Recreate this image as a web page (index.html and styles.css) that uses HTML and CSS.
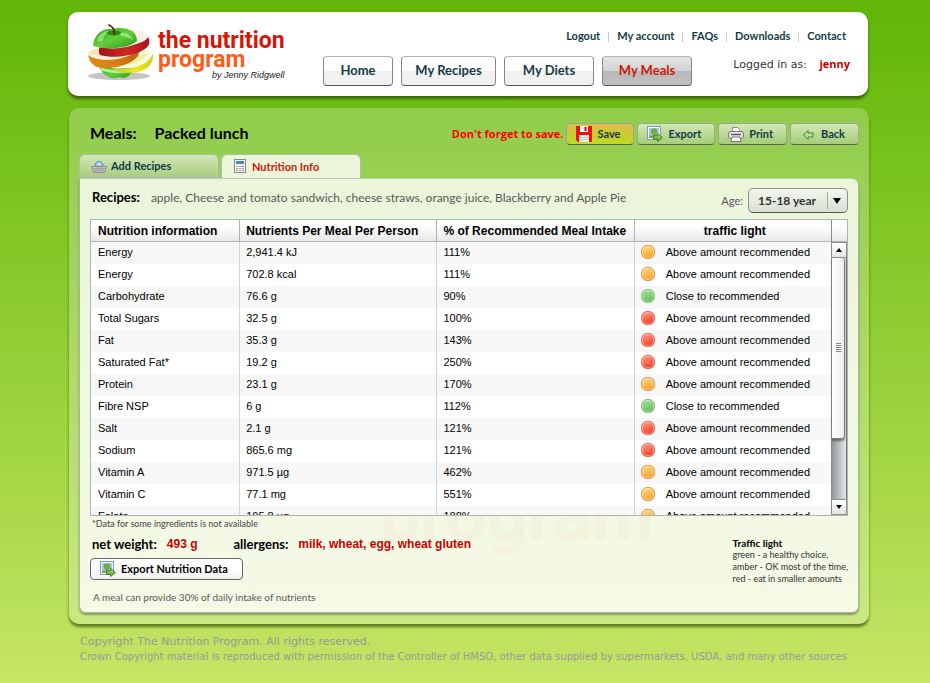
FILE: index.html
```html
<!DOCTYPE html>
<html lang="en">
<head>
    <meta charset="UTF-8">
    <meta name="viewport" content="width=device-width, initial-scale=1.0">
    <title>The Nutrition Program</title>
    <link rel="stylesheet" href="styles.css">
</head>
<body>
    <svg class="sprite" width="0" height="0" aria-hidden="true">
        <defs>
            <linearGradient id="gArrow" x1="0" y1="0" x2="0" y2="1">
                <stop offset="0" stop-color="#a9dc7c"/>
                <stop offset="1" stop-color="#55a626"/>
            </linearGradient>
        </defs>
        <symbol id="icon-export" viewBox="0 0 16 16">
            <rect x="0.5" y="0.5" width="13" height="13" fill="#f4f8fd" stroke="#7d9cc4"/>
            <rect x="2" y="2" width="10" height="10" fill="#a9c8ee"/>
            <path d="M2 9.5h10V12H2z" fill="#76a652"/>
            <rect x="6.3" y="7" width="1.6" height="4" fill="#7a6a3a"/>
            <circle cx="7" cy="5.5" r="3.3" fill="#72ad3f"/>
            <path d="M6.5 9.7h4V7.4l5 4.1-5 4.1v-2.3h-4z" fill="url(#gArrow)" stroke="#3a7d1b" stroke-width="0.9"/>
        </symbol>
    </svg>

    <header class="header">
        <a class="logo" href="#">
            <svg width="68" height="60" viewBox="0 0 68 60" aria-hidden="true">
                <defs>
                    <linearGradient id="gGreen" x1="0" y1="0" x2="1" y2="1">
                        <stop offset="0" stop-color="#2f9c17"/>
                        <stop offset="0.5" stop-color="#63cf3c"/>
                        <stop offset="1" stop-color="#2a9a14"/>
                    </linearGradient>
                    <linearGradient id="gRed" x1="0" y1="0" x2="1" y2="0">
                        <stop offset="0" stop-color="#9d1518"/>
                        <stop offset="0.55" stop-color="#d02a26"/>
                        <stop offset="1" stop-color="#a8171b"/>
                    </linearGradient>
                    <linearGradient id="gOrange" x1="0" y1="0" x2="1" y2="0">
                        <stop offset="0" stop-color="#e08a1c"/>
                        <stop offset="0.6" stop-color="#d97c12"/>
                        <stop offset="1" stop-color="#b9610b"/>
                    </linearGradient>
                    <linearGradient id="gYellow" x1="0" y1="0" x2="1" y2="0">
                        <stop offset="0" stop-color="#c9c40a"/>
                        <stop offset="0.6" stop-color="#eeea20"/>
                        <stop offset="1" stop-color="#d2d010"/>
                    </linearGradient>
                </defs>
                <ellipse cx="32" cy="54" rx="31" ry="4" fill="#c4c4c4"/>
                <path d="M12 45c4 8 11 12 17 11 3-1 4-1 7 0 5 0 9-5 11-10z" fill="url(#gGreen)"/>
                <path d="M12 45c10 3 22 5 35 1l-3 4c-10 2-21 1-29-1z" fill="#b9eaa0"/>
                <path d="M24 46c14 3 38-1 42-15 1 9-4 16-12 18-10 3-24 2-30-3z" fill="url(#gYellow)"/>
                <path d="M24 46c2-7 32-21 41-17 4 5-12 20-41 17z" fill="#fbfbe0"/>
                <path d="M33 43c8-6 20-11 27-11-2 7-15 11-27 11z" fill="#eef0a4"/>
                <path d="M1 32c1 7 4 11 9 13 13 3 33-1 41-11l2-6c-14 9-38 13-52 4z" fill="url(#gOrange)"/>
                <path d="M12 26C3 27 0 30 1 33c7 6 30 7 44-1z" fill="#fdf1dd"/>
                <path d="M12 26c-5 1-8 3-9 5 7 4 20 4 29 1z" fill="#fae0bd"/>
                <path d="M13 25c-2 3-1 6 0 8 16 5 46-1 49-11 1-4 0-6-2-8-7 10-31 15-47 11z" fill="url(#gRed)"/>
                <path d="M47 9c7-1 13 1 14 5 0 7-22 12-48 11z" fill="#fbf0e6"/>
                <path d="M6 24C7 13 14 6 25 7c6-2 14-1 18 1 5 2 7 6 7 11-9 8-30 9-44 5z" fill="url(#gGreen)"/>
                <path d="M10 18c2-6 7-9 12-9-3 2-6 6-6 9 0 2-6 2-6 0z" fill="#a5ec83" opacity="0.7"/>
                <path d="M30 12c6-3 14 0 16 6-5-3-11-4-16-6z" fill="#b4f18f" opacity="0.7"/>
                <ellipse cx="27" cy="11" rx="7" ry="2.5" fill="#2c8c13"/>
                <path d="M27 12c1-4-1-7-5-9" fill="none" stroke="#5c2b14" stroke-width="1.8" stroke-linecap="round"/>
            </svg>
            <span class="logo-text">
                <span class="logo-red">the nutrition</span>
                <span class="logo-orange">program</span>
                <span class="logo-by">by Jenny Ridgwell</span>
            </span>
        </a>
        <div class="header-right">
            <ul class="util-links">
                <li><a href="#">Logout</a></li>
                <li><a href="#">My account</a></li>
                <li><a href="#">FAQs</a></li>
                <li><a href="#">Downloads</a></li>
                <li><a href="#">Contact</a></li>
            </ul>
            <div class="nav-row">
                <nav class="nav">
                    <a href="#">Home</a>
                    <a href="#">My Recipes</a>
                    <a href="#">My Diets</a>
                    <a href="#" class="active">My Meals</a>
                </nav>
                <p class="login">Logged in as: <strong>jenny</strong></p>
            </div>
        </div>
    </header>

    <main class="main">
        <div class="title-row">
            <h1>Meals: <span>Packed lunch</span></h1>
            <div class="actions">
                <span class="warning">Don't forget to save.</span>
                <button type="button" class="btn btn-save">
                    <svg width="16" height="16" viewBox="0 0 16 16">
                        <path d="M0 0h16v16H2l-2-2z" fill="#ee1111"/>
                        <rect x="4" width="8" height="6" fill="#f3f3f3"/>
                        <rect x="8.5" y="1" width="2" height="4" fill="#d01010"/>
                        <rect x="3" y="9" width="10" height="7" fill="#e9ece9"/>
                        <path d="M3 11.5h10M3 13.5h10" stroke="#c9cdc9"/>
                    </svg>
                    Save
                </button>
                <button type="button" class="btn">
                    <svg width="16" height="16"><use href="#icon-export"/></svg>
                    Export
                </button>
                <button type="button" class="btn">
                    <svg width="16" height="16" viewBox="0 0 16 16">
                        <path d="M4.5 7V1.5h5l2 2V7" fill="#fff" stroke="#8b8b8b"/>
                        <rect x="0.5" y="5.5" width="15" height="7" rx="2.5" fill="#e6e6e6" stroke="#777"/>
                        <path d="M3 8.5h10" stroke="#555" stroke-width="1.4"/>
                        <path d="M4 11h8l1 4.500H3z" fill="#fff" stroke="#777"/>
                    </svg>
                    Print
                </button>
                <button type="button" class="btn">
                    <svg width="16" height="16" viewBox="0 0 16 16">
                        <path d="M3.500 9l4.500-4.500v2.500h5v4H8v2.500z" fill="#b4dd98" stroke="#3f8a24" stroke-linejoin="round"/>
                    </svg>
                    Back
                </button>
            </div>
        </div>

        <div class="tabs">
            <a href="#" class="tab">
                <svg width="16" height="16" viewBox="0 0 16 16">
                    <path d="M4 8c0-6 8-6 8 0" fill="#8fc3ea" stroke="#4f8fc4"/>
                    <path d="M6 7l2-3 2 3z" fill="#d8eefc"/>
                    <path d="M0.500 8.500h15l-2 6h-11z" fill="#c9c9c9" stroke="#8d8d8d"/>
                    <path d="M2 10.500h12M2.500 12.500h11M5 9v5M8 9v5M11 9v5" stroke="#979797" stroke-width="0.8"/>
                </svg>
                Add Recipes
            </a>
            <a href="#" class="tab active">
                <svg width="14" height="16" viewBox="0 0 14 16">
                    <rect x="1.500" y="1.500" width="11" height="13" fill="#fafafa" stroke="#8a8a8a"/>
                    <rect x="3" y="3" width="8" height="3" fill="#4a7fcb"/>
                    <path d="M3 8.500h2M6 8.500h2M3 10.500h2M6 10.500h2M9 10.500h2M3 12.500h2M6 12.500h2M9 12.500h2" stroke="#999"/>
                    <path d="M9 8.500h2" stroke="#e33"/>
                </svg>
                Nutrition Info
            </a>
        </div>

        <section class="panel">
            <span class="watermark" aria-hidden="true">program</span>
            <div class="recipes-row">
                <p class="recipes"><strong>Recipes:</strong> apple, Cheese and tomato sandwich, cheese straws, orange juice, Blackberry and Apple Pie</p>
                <label for="age">Age:</label>
                <span class="select-box">
                    <select id="age">
                        <option>15-18 year</option>
                    </select>
                </span>
            </div>

            <div class="grid">
                <table>
                    <thead>
                        <tr>
                            <th>Nutrition information</th>
                            <th>Nutrients Per Meal Per Person</th>
                            <th>% of Recommended Meal Intake</th>
                            <th>traffic light</th>
                        </tr>
                    </thead>
                    <tbody>
                        <tr><td>Energy</td><td>2,941.4 kJ</td><td>111%</td><td><i class="light amber"></i>Above amount recommended</td></tr>
                        <tr><td>Energy</td><td>702.8 kcal</td><td>111%</td><td><i class="light amber"></i>Above amount recommended</td></tr>
                        <tr><td>Carbohydrate</td><td>76.6 g</td><td>90%</td><td><i class="light green"></i>Close to recommended</td></tr>
                        <tr><td>Total Sugars</td><td>32.5 g</td><td>100%</td><td><i class="light red"></i>Above amount recommended</td></tr>
                        <tr><td>Fat</td><td>35.3 g</td><td>143%</td><td><i class="light red"></i>Above amount recommended</td></tr>
                        <tr><td>Saturated Fat*</td><td>19.2 g</td><td>250%</td><td><i class="light red"></i>Above amount recommended</td></tr>
                        <tr><td>Protein</td><td>23.1 g</td><td>170%</td><td><i class="light amber"></i>Above amount recommended</td></tr>
                        <tr><td>Fibre NSP</td><td>6 g</td><td>112%</td><td><i class="light green"></i>Close to recommended</td></tr>
                        <tr><td>Salt</td><td>2.1 g</td><td>121%</td><td><i class="light red"></i>Above amount recommended</td></tr>
                        <tr><td>Sodium</td><td>865.6 mg</td><td>121%</td><td><i class="light red"></i>Above amount recommended</td></tr>
                        <tr><td>Vitamin A</td><td>971.5 µg</td><td>462%</td><td><i class="light amber"></i>Above amount recommended</td></tr>
                        <tr><td>Vitamin C</td><td>77.1 mg</td><td>551%</td><td><i class="light amber"></i>Above amount recommended</td></tr>
                        <tr><td>Folate</td><td>195.8 µg</td><td>188%</td><td><i class="light amber"></i>Above amount recommended</td></tr>
                    </tbody>
                </table>
                <div class="scroll-col">
                    <div class="scroll-head"></div>
                    <button type="button" class="scroll-btn" aria-label="Scroll up"><svg width="6" height="4"><path d="M0 4h6L3 0z"/></svg></button>
                    <div class="scroll-track"><div class="scroll-thumb"><span></span></div></div>
                    <button type="button" class="scroll-btn" aria-label="Scroll down"><svg width="6" height="4"><path d="M0 0h6L3 4z"/></svg></button>
                </div>
            </div>

            <div class="summary">
                <div>
                    <p class="footnote">*Data for some ingredients is not available</p>
                    <dl class="totals">
                        <dt>net weight:</dt><dd>493 g</dd>
                        <dt>allergens:</dt><dd>milk, wheat, egg, wheat gluten</dd>
                    </dl>
                    <button type="button" class="btn btn-white">
                        <svg width="16" height="16"><use href="#icon-export"/></svg>
                        Export Nutrition Data
                    </button>
                    <p class="note">A meal can provide 30% of daily intake of nutrients</p>
                </div>
                <div class="legend">
                    <h2>Traffic light</h2>
                    <p>green - a healthy choice,<br>amber - OK most of the time,<br>red - eat in smaller amounts</p>
                </div>
            </div>
        </section>
    </main>

    <footer class="footer">
        <p>Copyright The Nutrition Program. All rights reserved.</p>
        <p class="small">Crown Copyright material is reproduced with permission of the Controller of HMSO, other data supplied by supermarkets, USDA, and many other sources</p>
    </footer>
</body>
</html>
```
FILE: styles.css
```css
* {
    box-sizing: border-box;
}
body {
    margin: 0;
    padding: 12px 61px 0 68px;
    min-height: 100vh;
    background: linear-gradient(#60b506, #72bf17 18%, #a8d848 72%, #bbe05b 90%, #c7e566) no-repeat;
    font-family: Lato, "Liberation Sans", sans-serif;
    font-size: 12px;
    color: #000;
}
p, h1, h2, ul, dl, dd {
    margin: 0;
    padding: 0;
}
a {
    color: inherit;
    text-decoration: none;
}
.sprite {
    position: absolute;
}

/* header */
.header {
    display: flex;
    height: 84px;
    margin-right: 1px;
    background: #fff;
    border-radius: 10px;
    box-shadow: 0 3px 3px rgba(35, 65, 0, 0.7);
}
.logo {
    display: flex;
    flex: 0 0 255px;
    padding: 10px 0 0 19px;
}
.logo svg {
    flex: none;
}
.logo-text {
    display: flex;
    flex-direction: column;
    padding: 9px 0 0 3px;
    font-family: Roboto, sans-serif;
    font-weight: 700;
    font-size: 23px;
    line-height: 19px;
    white-space: nowrap;
}
.logo-red {
    color: #d31706;
}
.logo-orange {
    color: #ff5d16;
}
.logo-by {
    align-self: flex-end;
    font: italic 9px/12px "Liberation Sans", sans-serif;
    color: #222;
}
.header-right {
    flex: 1;
}
.util-links {
    display: flex;
    justify-content: flex-end;
    padding: 16px 22px 0 0;
    list-style: none;
    font-weight: 700;
    font-size: 11px;
    line-height: 16px;
    color: #123c45;
}
.util-links li {
    display: flex;
    align-items: center;
}
.util-links li + li::before {
    content: "";
    width: 1px;
    height: 10px;
    margin: 2px 8px 0;
    background: #c5cccc;
}
.nav-row {
    display: flex;
    justify-content: space-between;
    padding: 12px 18px 0 0;
}
.nav {
    display: grid;
    grid-template-columns: 70px 95px 90px 90px;
    gap: 8px;
}
.nav a {
    height: 30px;
    border: 1px solid #888;
    border-top-color: #b5b5b5;
    border-bottom-color: #555;
    border-radius: 4px;
    background: linear-gradient(#fff 50%, #f1f1f1 50%);
    font-weight: 700;
    font-size: 13px;
    line-height: 26px;
    text-align: center;
    color: #123c45;
}
.nav a.active {
    background: linear-gradient(#e4e4e4, #d2d2d2 50%, #b8b8b8 50%, #c0c0c0);
    color: #d01708;
}
.login {
    font: 11px/16px "DejaVu Sans", sans-serif;
    color: #333;
}
.login strong {
    margin-left: 9px;
    font-family: "Open Sans", sans-serif;
    color: #c80000;
}

/* main box */
.main {
    margin: 12px 0 0 1px;
    padding: 15px 10px 11px;
    border-radius: 10px;
    background: rgba(255, 255, 255, 0.23);
    box-shadow: 0 3px 3px rgba(50, 80, 10, 0.7);
}
.title-row {
    display: flex;
    justify-content: space-between;
    padding-left: 11px;
}
.title-row h1 {
    font-size: 16px;
    line-height: 19px;
}
.title-row h1 span {
    margin-left: 14px;
}
.actions {
    display: flex;
    align-items: center;
    gap: 3px;
}
.warning {
    font: bold 11px/20px "Open Sans", sans-serif;
    color: #f00;
}
.btn {
    display: flex;
    align-items: center;
    gap: 5px;
    height: 22px;
    padding: 0 13px 1px 9px;
    border: 1px solid #9aa795;
    border-bottom-color: #5a6256;
    border-radius: 4px;
    background: linear-gradient(#d2e7b8, #a6cc78);
    font: bold 11px Lato, sans-serif;
    color: #123c45;
}
.btn-save {
    background: linear-gradient(#e0c052, #c8cc2c 60%, #bedc26);
}
.btn-white {
    padding-right: 14px;
    border-color: #666;
    background: linear-gradient(#fff 50%, #f0f0f0);
    color: #000;
}
.tabs {
    display: flex;
    gap: 2px;
    margin-top: 9px;
}
.tab {
    display: flex;
    align-items: center;
    gap: 4px;
    width: 140px;
    height: 24px;
    padding: 0 0 1px 11px;
    border: 1px solid #b2bbb0;
    border-radius: 6px 6px 0 0;
    background: linear-gradient(#d2e7b8, #a9cd7f);
    font-weight: 700;
    font-size: 11px;
    color: #123c45;
}
.tab.active {
    gap: 5px;
    border-bottom: none;
    background: #eaf5da;
    color: #d01708;
}
.panel {
    position: relative;
    padding: 0 10px 8px;
    border: 1px solid #adb3b3;
    border-top-color: #c0c8bc;
    border-radius: 0 7px 7px 7px;
    background: linear-gradient(#eaf5da, #f5fae6);
    box-shadow: 0 2px 2px rgba(60, 90, 40, 0.5);
}
.watermark {
    position: absolute;
    left: 300px;
    bottom: 54px;
    font: bold 72px/84px Roboto, sans-serif;
    color: rgba(255, 100, 60, 0.04);
}
.recipes-row {
    position: relative;
    display: flex;
    align-items: center;
    height: 40px;
}
.recipes {
    flex: 1;
    padding: 0 0 4px 2px;
    color: #595959;
}
.recipes strong {
    margin-right: 8px;
    font-size: 13px;
    color: #000;
}
.recipes-row label {
    margin: 3px 5px 0 0;
    font-size: 11px;
    color: #595959;
}
.select-box {
    position: relative;
    margin-top: 3px;
}
.select-box::before {
    content: "";
    position: absolute;
    top: 4px;
    right: 20px;
    width: 1px;
    height: 17px;
    background: #aaa;
}
.select-box::after {
    content: "";
    position: absolute;
    top: 10px;
    right: 7px;
    border: 4px solid transparent;
    border-top: 6px solid #000;
    border-bottom: none;
}
select {
    appearance: none;
    display: block;
    width: 100px;
    height: 25px;
    padding: 0 0 0 9px;
    border: 1px solid #8b908a;
    border-bottom-color: #555;
    border-radius: 5px;
    background: linear-gradient(#f3f6ee, #d9dfd2);
    font: bold 12px Lato, sans-serif;
    color: #333;
}

/* nutrition table */
.grid {
    position: relative;
    display: flex;
    height: 297px;
    overflow: hidden;
    border: 1px solid #aeb3b5;
    background: #fff;
}
table {
    flex: 1;
    align-self: flex-start;
    table-layout: fixed;
    border-collapse: separate;
    border-spacing: 0;
    font: 11px/14px "Liberation Sans", sans-serif;
}
th, td {
    height: 22px;
    padding: 0 0 0 6px;
    border-left: 1px solid #d3d6d8;
    text-align: left;
    white-space: nowrap;
}
td {
    padding-bottom: 2px;
}
th:first-child, td:first-child {
    padding-left: 7px;
    border-left: none;
}
th {
    width: 197px;
    border-left-color: #aeb3b5;
    border-bottom: 1px solid #aeb3b5;
    background: linear-gradient(#fff 30%, #e8e8e8);
    font-size: 12px;
}
th:first-child {
    width: 148px;
}
th:last-child {
    padding-left: 4px;
    text-align: center;
}
tbody tr:nth-child(odd) {
    background: #f7f7f7;
}
.light {
    display: inline-block;
    width: 14px;
    height: 14px;
    margin-right: 11px;
    border: 1px solid;
    border-radius: 6px;
    box-shadow: inset 0 0 0 1px rgba(255, 255, 255, 0.4);
    vertical-align: -3px;
}
.amber {
    border-color: #d99a50;
    background: linear-gradient(160deg, #ffdf8a, #fb9a1c);
}
.green {
    border-color: #8cc283;
    background: linear-gradient(160deg, #a8e09b, #5dbb4c);
}
.red {
    border-color: #db6f60;
    background: linear-gradient(160deg, #ffa08c, #f63218);
}
.scroll-col {
    display: flex;
    flex: none;
    flex-direction: column;
    width: 16px;
    border-left: 1px solid #888d90;
}
.scroll-head {
    height: 22px;
    border-bottom: 1px solid #aeb3b5;
    background: linear-gradient(#fff 30%, #e8e8e8);
}
.scroll-btn {
    display: flex;
    align-items: center;
    justify-content: center;
    height: 16px;
    padding: 0;
    border: 1px solid #8d9194;
    border-left: none;
    background: linear-gradient(#fff, #e4e4e4);
}
.scroll-track {
    flex: 1;
    border-right: 1px solid #777;
    background: linear-gradient(90deg, #92979a, #e6e8e8);
}
.scroll-thumb {
    display: flex;
    align-items: center;
    justify-content: center;
    width: 13px;
    height: 75%;
    border: 1px solid #777b7d;
    border-left: none;
    border-top: none;
    border-radius: 0 3px 3px 0;
    background: linear-gradient(90deg, #fff, #ececec);
    box-shadow: 0 2px 2px rgba(0, 0, 0, 0.4);
}
.scroll-thumb span {
    width: 5px;
    height: 9px;
    background: repeating-linear-gradient(#888 0 1px, transparent 1px 2px);
}

/* below the table */
.summary {
    position: relative;
    display: flex;
    justify-content: space-between;
}
.footnote {
    padding: 1px 0 0 2px;
    font-size: 9px;
    line-height: 13px;
    color: #444;
}
.totals {
    display: flex;
    padding: 7px 0;
    padding-left: 2px;
    font-weight: 700;
    font-size: 13px;
    line-height: 14px;
}
.totals dd {
    margin: 0 36px 0 10px;
    font-family: "Liberation Sans", sans-serif;
    font-size: 12px;
    color: #c80000;
}
.note {
    padding: 10px 0 0 3px;
    font-size: 10px;
    line-height: 14px;
    color: #595959;
}
.legend {
    padding-top: 21px;
    font-size: 9px;
    line-height: 12px;
    color: #333;
}
.legend h2 {
    font-size: 10px;
    line-height: 12px;
    color: #000;
}

.footer {
    padding: 10px 12px 0;
    font: 11px/15px "DejaVu Sans", sans-serif;
    color: #999;
    white-space: nowrap;
}
.footer .small {
    font-size: 10px;
}
```
